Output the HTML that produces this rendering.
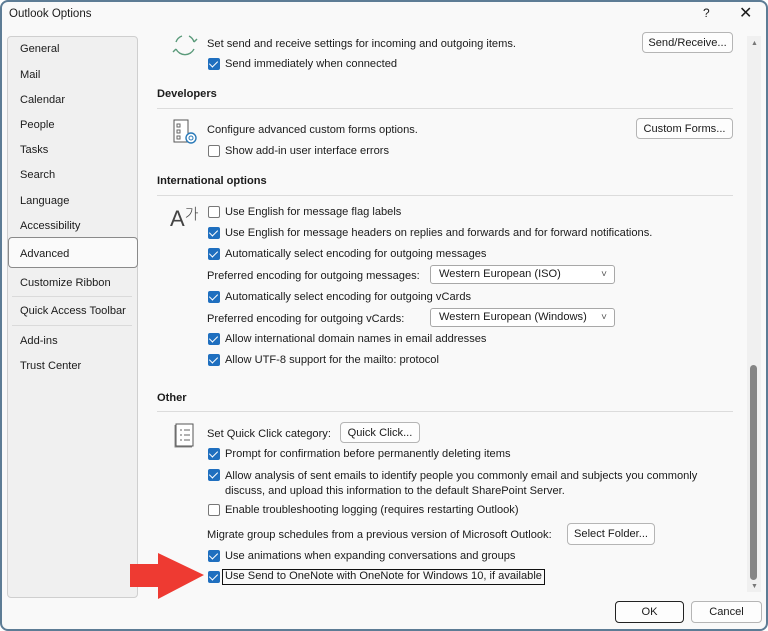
<!DOCTYPE html>
<html><head><meta charset="utf-8"><style>
*{margin:0;padding:0;box-sizing:border-box}
body{width:768px;height:631px;overflow:hidden;background:#fff;font-family:"Liberation Sans",sans-serif;font-size:11.1px;color:#1b1b1b;position:relative}
.win{position:absolute;left:0;top:0;width:768px;height:631px;background:#f9f9f9;border:2px solid #5d7c95;border-radius:8px}
.a{position:absolute;white-space:nowrap}
.t{margin-top:1px}
.nav{position:absolute;left:7px;top:36px;width:131px;height:562px;background:#f0f0f0;border:1px solid #cfcfcf;border-radius:4px}
.sel{position:absolute;left:8px;top:237px;width:130px;height:31px;background:#fafafa;border:1px solid #8a8a8a;border-radius:4px}
.cb{position:absolute;width:12px;height:12px;border-radius:2px;background:#1f6fbf;margin-top:1px}
.cb:after{content:"";position:absolute;left:3px;top:1px;width:4px;height:7px;border:solid #fff;border-width:0 1.6px 1.6px 0;transform:rotate(45deg)}
.cu{position:absolute;width:12px;height:12px;border-radius:2px;border:1px solid #777;background:#fff;margin-top:1px}
.btn{position:absolute;background:#fdfdfd;border:1px solid #b5b5b5;border-radius:4px;text-align:center;line-height:20px}
.h{position:absolute;font-weight:bold;left:157px;margin-top:1px}
.hr{position:absolute;left:157px;width:576px;height:1px;background:#dcdcdc}
.sep{position:absolute;left:12px;width:120px;height:1px;background:#dadada}
.dd{position:absolute;background:#fff;border:1px solid #a8a8a8;border-radius:3px;padding-left:8px;line-height:17px}
.dd:after{content:"˅";position:absolute;right:7px;top:0;font-size:10px;color:#555}
</style></head><body>
<div class="win"></div>
<div class="a" style="left:9px;top:8px;font-size:11.5px">Outlook Options</div>
<div class="a" style="left:703px;top:6px;font-size:12px">?</div>
<div class="a" style="left:739px;top:3px;font-size:16px">✕</div>
<div class="nav"></div>
<div class="sel"></div>
<div class="sep" style="top:296px"></div>
<div class="sep" style="top:325px"></div>
<div class="a t" style="left:20px;top:42px">General</div>
<div class="a t" style="left:20px;top:68px">Mail</div>
<div class="a t" style="left:20px;top:93px">Calendar</div>
<div class="a t" style="left:20px;top:118px">People</div>
<div class="a t" style="left:20px;top:143px">Tasks</div>
<div class="a t" style="left:20px;top:168px">Search</div>
<div class="a t" style="left:20px;top:194px">Language</div>
<div class="a t" style="left:20px;top:219px">Accessibility</div>
<div class="a t" style="left:20px;top:247px">Advanced</div>
<div class="a t" style="left:20px;top:276px">Customize Ribbon</div>
<div class="a t" style="left:20px;top:304px">Quick Access Toolbar</div>
<div class="a t" style="left:20px;top:334px">Add-ins</div>
<div class="a t" style="left:20px;top:359px">Trust Center</div>

<svg class="a" style="left:170px;top:31px" width="30" height="30"><path d="M6 11 A10 10 0 0 1 12 5" fill="none" stroke="#5a9a7a" stroke-width="1.4"/><path d="M19 5 A10 10 0 0 1 24 11" fill="none" stroke="#5a9a7a" stroke-width="1.4"/><path d="M24 11 l3 -3" fill="none" stroke="#5a9a7a" stroke-width="1.4"/><path d="M24 18 A10 10 0 0 1 6 18" fill="none" stroke="#5a9a7a" stroke-width="1.4"/><path d="M6 18 l-3 3" fill="none" stroke="#5a9a7a" stroke-width="1.4"/></svg>
<div class="a t" style="left:207px;top:37px">Set send and receive settings for incoming and outgoing items.</div>
<div class="btn" style="left:642px;top:32px;width:91px;height:21px">Send/Receive...</div>
<div class="cb" style="left:208px;top:57px"></div><div class="a t" style="left:225px;top:57px">Send immediately when connected</div>
<div class="h" style="top:87px">Developers</div><div class="hr" style="top:108px"></div>
<svg class="a" style="left:172px;top:118px" width="28" height="30"><rect x="2" y="2" width="14" height="22" fill="#fff" stroke="#555"/><rect x="5" y="6" width="3" height="3" fill="none" stroke="#666"/><rect x="5" y="12" width="3" height="3" fill="none" stroke="#666"/><rect x="5" y="18" width="3" height="3" fill="none" stroke="#666"/><circle cx="19" cy="20" r="5" fill="#fff" stroke="#2a7ab8" stroke-width="1.4"/><circle cx="19" cy="20" r="2" fill="none" stroke="#2a7ab8"/></svg>
<div class="a t" style="left:207px;top:123px">Configure advanced custom forms options.</div>
<div class="btn" style="left:636px;top:118px;width:97px;height:21px">Custom Forms...</div>
<div class="cu" style="left:208px;top:144px"></div><div class="a t" style="left:225px;top:144px">Show add-in user interface errors</div>
<div class="h" style="top:174px">International options</div><div class="hr" style="top:195px"></div>
<div class="a" style="left:170px;top:206px;font-size:22px;color:#444;font-family:'Liberation Sans','Noto Sans CJK KR',sans-serif;font-weight:300">A<span style="font-size:15px;position:relative;top:-7px">가</span></div>
<div class="cu" style="left:208px;top:205px"></div><div class="a t" style="left:225px;top:205px">Use English for message flag labels</div>
<div class="cb" style="left:208px;top:226px"></div><div class="a t" style="left:225px;top:226px">Use English for message headers on replies and forwards and for forward notifications.</div>
<div class="cb" style="left:208px;top:247px"></div><div class="a t" style="left:225px;top:247px">Automatically select encoding for outgoing messages</div>
<div class="a t" style="left:207px;top:269px">Preferred encoding for outgoing messages:</div>
<div class="dd" style="left:430px;top:265px;width:185px;height:19px">Western European (ISO)</div>
<div class="cb" style="left:208px;top:290px"></div><div class="a t" style="left:225px;top:290px">Automatically select encoding for outgoing vCards</div>
<div class="a t" style="left:207px;top:312px">Preferred encoding for outgoing vCards:</div>
<div class="dd" style="left:430px;top:308px;width:185px;height:19px">Western European (Windows)</div>
<div class="cb" style="left:208px;top:332px"></div><div class="a t" style="left:225px;top:332px">Allow international domain names in email addresses</div>
<div class="cb" style="left:208px;top:353px"></div><div class="a t" style="left:225px;top:353px">Allow UTF-8 support for the mailto: protocol</div>
<div class="h" style="top:391px">Other</div><div class="hr" style="top:411px"></div>
<svg class="a" style="left:173px;top:421px" width="24" height="28"><rect x="3" y="3" width="17" height="22" fill="#fff" stroke="#555"/><path d="M2 4 v22 h17" fill="none" stroke="#888"/><path d="M7 9h2M11 9h6M7 14h2M11 14h6M7 19h2M11 19h6" stroke="#666"/></svg>
<div class="a t" style="left:207px;top:427px">Set Quick Click category:</div>
<div class="btn" style="left:340px;top:422px;width:80px;height:21px">Quick Click...</div>
<div class="cb" style="left:208px;top:447px"></div><div class="a t" style="left:225px;top:447px">Prompt for confirmation before permanently deleting items</div>
<div class="cb" style="left:208px;top:468px"></div><div class="a t" style="left:225px;top:468px;line-height:15px">Allow analysis of sent emails to identify people you commonly email and subjects you commonly<br>discuss, and upload this information to the default SharePoint Server.</div>
<div class="cu" style="left:208px;top:503px"></div><div class="a t" style="left:225px;top:503px">Enable troubleshooting logging (requires restarting Outlook)</div>
<div class="a t" style="left:207px;top:528px">Migrate group schedules from a previous version of Microsoft Outlook:</div>
<div class="btn" style="left:567px;top:523px;width:88px;height:22px">Select Folder...</div>
<div class="cb" style="left:208px;top:549px"></div><div class="a t" style="left:225px;top:549px">Use animations when expanding conversations and groups</div>
<div class="cb" style="left:208px;top:570px"></div><div class="a" style="left:222px;top:569px;border:1.5px solid #111;padding:0 2px;height:16px;line-height:13px">Use Send to OneNote with OneNote for Windows 10, if available</div>
<svg class="a" style="left:128px;top:550px" width="80" height="52"><path d="M2 14 H30 V3 L76 25 L30 49 V37 H2 Z" fill="#ee3a32"/></svg>
<div class="a" style="left:747px;top:36px;width:14px;height:556px;background:#f0f0f0"></div>
<div class="a" style="left:751px;top:40px;font-size:7px;color:#777">▲</div>
<div class="a" style="left:750px;top:365px;width:7px;height:215px;background:#858585;border-radius:4px"></div>
<div class="a" style="left:751px;top:583px;font-size:7px;color:#777">▼</div>
<div class="btn" style="left:615px;top:601px;width:69px;height:22px;border:1.5px solid #222">OK</div>
<div class="btn" style="left:691px;top:601px;width:71px;height:22px">Cancel</div>
</body></html>
